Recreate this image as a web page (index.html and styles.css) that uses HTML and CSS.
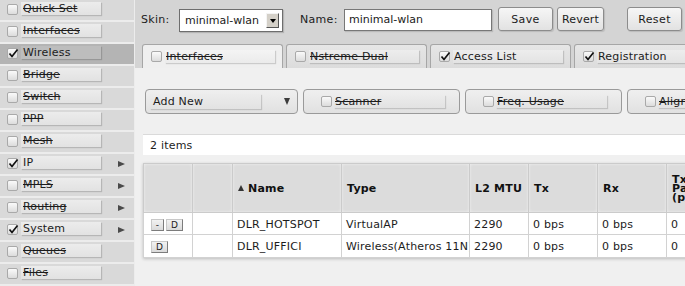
FILE: index.html
```html
<!DOCTYPE html>
<html>
<head>
<meta charset="utf-8">
<title>WebFig</title>
<link rel="stylesheet" href="styles.css">
</head>
<body>
<div class="app">
  <nav class="side">
    <div class="item"><span class="cb"></span><span class="lbl off">Quick Set</span></div>
    <div class="item"><span class="cb"></span><span class="lbl off">Interfaces</span></div>
    <div class="item sel"><span class="cb on"><svg viewBox="0 0 10 10"><path d="M1.5 4.5 L4 7.5 L9.5 0.5" /></svg></span><span class="lbl">Wireless</span></div>
    <div class="item"><span class="cb"></span><span class="lbl off">Bridge</span></div>
    <div class="item"><span class="cb"></span><span class="lbl off">Switch</span></div>
    <div class="item"><span class="cb"></span><span class="lbl off">PPP</span></div>
    <div class="item"><span class="cb"></span><span class="lbl off">Mesh</span></div>
    <div class="item"><span class="cb on"><svg viewBox="0 0 10 10"><path d="M1.5 4.5 L4 7.5 L9.5 0.5" /></svg></span><span class="lbl">IP</span><span class="arrow"></span></div>
    <div class="item"><span class="cb"></span><span class="lbl off">MPLS</span><span class="arrow"></span></div>
    <div class="item"><span class="cb"></span><span class="lbl off">Routing</span><span class="arrow"></span></div>
    <div class="item"><span class="cb on"><svg viewBox="0 0 10 10"><path d="M1.5 4.5 L4 7.5 L9.5 0.5" /></svg></span><span class="lbl">System</span><span class="arrow"></span></div>
    <div class="item"><span class="cb"></span><span class="lbl off">Queues</span></div>
    <div class="item"><span class="cb"></span><span class="lbl off">Files</span></div>
  </nav>

  <main class="main">
    <div class="topbar">
      <span class="flabel skin">Skin:</span>
      <div class="select"><span class="seltext">minimal-wlan</span><span class="selbtn"><span class="seltri"></span></span></div>
      <span class="flabel name">Name:</span>
      <div class="input">minimal-wlan</div>
      <button class="btn save">Save</button>
      <button class="btn revert">Revert</button>
      <button class="btn reset">Reset</button>
    </div>

    <div class="tabs">
      <div class="tab active"><span class="cb"></span><span class="tlbl off">Interfaces</span></div>
      <div class="tab"><span class="cb"></span><span class="tlbl off">Nstreme Dual</span></div>
      <div class="tab"><span class="cb on"><svg viewBox="0 0 10 10"><path d="M1.5 4.5 L4 7.5 L9.5 0.5" /></svg></span><span class="tlbl">Access List</span></div>
      <div class="tab"><span class="cb on"><svg viewBox="0 0 10 10"><path d="M1.5 4.5 L4 7.5 L9.5 0.5" /></svg></span><span class="tlbl">Registration</span></div>
    </div>

    <div class="panel">
      <div class="toolbar">
        <div class="tbtn addnew"><span class="blbl big">Add New</span><span class="downtri"></span></div>
        <div class="tbtn chk"><span class="cb"></span><span class="blbl off">Scanner</span></div>
        <div class="tbtn chk"><span class="cb"></span><span class="blbl off">Freq. Usage</span></div>
        <div class="tbtn chk"><span class="cb"></span><span class="blbl off">Align</span></div>
      </div>

      <div class="count">2 items</div>

      <table class="grid">
        <colgroup>
          <col class="c1"><col class="c2"><col class="c3"><col class="c4"><col class="c5"><col class="c6"><col class="c7"><col class="c8">
        </colgroup>
        <thead>
          <tr>
            <th></th>
            <th></th>
            <th><span class="sorttri"></span>Name</th>
            <th>Type</th>
            <th>L2 MTU</th>
            <th>Tx</th>
            <th>Rx</th>
            <th class="multi">Tx<br>Packet<br>(p/s)</th>
          </tr>
        </thead>
        <tbody>
          <tr>
            <td class="acts"><span class="rb minus">-</span><span class="rb">D</span></td>
            <td></td>
            <td>DLR_HOTSPOT</td>
            <td>VirtualAP</td>
            <td>2290</td>
            <td>0 bps</td>
            <td>0 bps</td>
            <td>0</td>
          </tr>
          <tr>
            <td class="acts"><span class="rb">D</span></td>
            <td></td>
            <td>DLR_UFFICI</td>
            <td>Wireless(Atheros 11N)</td>
            <td>2290</td>
            <td>0 bps</td>
            <td>0 bps</td>
            <td>0</td>
          </tr>
        </tbody>
      </table>
    </div>
  </main>
</div>
</body>
</html>
```

FILE: styles.css
```css
html, body {
  margin: 0;
  padding: 0;
}
body {
  width: 685px;
  height: 286px;
  overflow: hidden;
  font-family: "DejaVu Sans", Verdana, sans-serif;
  font-size: 11px;
  color: #1c1c1c;
  background: #d4d4d4;
}
.app {
  display: flex;
  height: 286px;
}

/* ---------- sidebar ---------- */
.side {
  width: 134px;
  flex: none;
  background: #d9d9d9;
  border-right: 1px solid #ececec;
}
.item {
  height: 20px;
  border-bottom: 2px solid #ececec;
  display: flex;
  align-items: flex-start;
  padding-left: 7px;
}
.item.sel {
  background: #b4b4b4;
}
.cb {
  width: 9px;
  height: 9px;
  flex: none;
  border: 1px solid #a9a9a9;
  border-radius: 2px;
  background: linear-gradient(#fafafa, #dcdcdc);
  margin-top: 4px;
  box-sizing: content-box;
}
.cb svg {
  display: block;
  width: 10px;
  height: 10px;
  overflow: visible;
}
.cb svg path {
  fill: none;
  stroke: #111;
  stroke-width: 1.7;
}
.lbl {
  margin-left: 3px;
  margin-top: 2px;
  width: 78px;
  height: 13px;
  line-height: 13px;
  padding-left: 2px;
  background: linear-gradient(#ececec, #e2e2e2);
  box-shadow: 1px 1px 1px rgba(0, 0, 0, 0.16);
  white-space: nowrap;
  overflow: hidden;
  letter-spacing: 0.2px;
}
.item.sel .lbl {
  background: #bdbdbd;
}
.off {
  text-decoration: line-through;
}
.arrow {
  margin-left: auto;
  margin-right: 9px;
  margin-top: 7px;
  width: 0;
  height: 0;
  border-left: 7px solid #4a4a4a;
  border-top: 3.5px solid transparent;
  border-bottom: 3.5px solid transparent;
}

/* ---------- main ---------- */
.main {
  flex: 1;
  min-width: 0;
  overflow: hidden;
  background: #d4d4d4;
  display: flex;
  flex-direction: column;
}
.topbar {
  display: flex;
  align-items: flex-start;
  padding: 7px 0 0 6px;
  height: 25px;
}
.flabel {
  line-height: 25px;
  letter-spacing: 0.3px;
  flex: none;
}
.flabel.skin {
  width: 38px;
}
.flabel.name {
  width: 44px;
  margin-left: 17px;
}
.select {
  width: 104px;
  height: 23px;
  box-sizing: border-box;
  margin-top: 2px;
  background: #fff;
  border: 1px solid #6e6e6e;
  box-shadow: 1px 1px 1px rgba(0, 0, 0, 0.15);
  display: flex;
  align-items: center;
  flex: none;
}
.seltext {
  padding-left: 5px;
  flex: 1;
  white-space: nowrap;
  overflow: hidden;
}
.selbtn {
  width: 13px;
  height: 15px;
  margin-right: 3px;
  box-sizing: border-box;
  background: #d4d0c8;
  border: 1px solid;
  border-color: #f4f4f4 #555 #555 #f4f4f4;
  display: flex;
  align-items: center;
  justify-content: center;
}
.seltri {
  width: 0;
  height: 0;
  border-top: 4px solid #000;
  border-left: 3.5px solid transparent;
  border-right: 3.5px solid transparent;
}
.input {
  width: 148px;
  height: 22px;
  box-sizing: border-box;
  margin-top: 2px;
  background: #fff;
  border: 1px solid #777;
  box-shadow: 1px 1px 1px rgba(0, 0, 0, 0.12);
  line-height: 20px;
  padding-left: 4px;
  flex: none;
}
.btn {
  height: 24px;
  box-sizing: border-box;
  border: 1px solid #8c8c8c;
  border-radius: 3px;
  background: linear-gradient(#f6f6f6, #e2e2e2);
  box-shadow: 1px 1px 1px rgba(0, 0, 0, 0.12);
  font: inherit;
  color: inherit;
  letter-spacing: 0.4px;
  padding: 0;
  flex: none;
}
.btn.save {
  width: 55px;
  margin-left: 6px;
}
.btn.revert {
  width: 47px;
  margin-left: 4px;
  letter-spacing: 0.2px;
}
.btn.reset {
  width: 55px;
  margin-left: 23px;
}

/* ---------- tabs ---------- */
.tabs {
  display: flex;
  gap: 3px;
  margin-top: 12px;
  padding-left: 7px;
  height: 24px;
}
.tab {
  width: 141px;
  height: 24px;
  flex: none;
  box-sizing: border-box;
  border: 1px solid #a6a6a6;
  border-bottom: none;
  border-radius: 3px 3px 0 0;
  background: linear-gradient(#e6e6e6, #dcdcdc);
  display: flex;
  align-items: flex-start;
  padding-left: 8px;
}
.tab.active {
  background: #efefef;
}
.tab .cb {
  margin-top: 6px;
}
.tlbl {
  margin-left: 3px;
  margin-top: 5px;
  width: 109px;
  height: 13px;
  line-height: 13px;
  padding-left: 1px;
  background: linear-gradient(#ededed, #e3e3e3);
  box-shadow: 1px 1px 1px rgba(0, 0, 0, 0.15);
  white-space: nowrap;
  overflow: hidden;
  letter-spacing: 0.2px;
}
.tab.active .tlbl {
  background: linear-gradient(#f4f4f4, #ebebeb);
}

/* ---------- panel ---------- */
.panel {
  flex: 1;
  background: #f0f0f0;
  overflow: hidden;
}
.toolbar {
  display: flex;
  gap: 5px;
  padding: 21px 0 0 10px;
}
.tbtn {
  height: 25px;
  box-sizing: border-box;
  border: 1px solid #9a9a9a;
  border-radius: 4px;
  background: linear-gradient(#efefef, #e1e1e1);
  display: flex;
  align-items: center;
  flex: none;
}
.tbtn.addnew {
  width: 153px;
  padding-left: 4px;
}
.tbtn.chk {
  width: 157px;
  padding-left: 17px;
}
.tbtn .cb {
  margin-top: 0;
}
.blbl {
  margin-left: 2px;
  width: 110px;
  height: 13px;
  line-height: 13px;
  padding-left: 1px;
  background: linear-gradient(#ececec, #e2e2e2);
  box-shadow: 1px 1px 1px rgba(0, 0, 0, 0.15);
  white-space: nowrap;
  overflow: hidden;
  letter-spacing: 0.2px;
}
.blbl.big {
  margin-left: 0;
  width: 108px;
  height: 15px;
  line-height: 15px;
  padding-left: 3px;
}
.downtri {
  margin-left: auto;
  margin-right: 7px;
  width: 0;
  height: 0;
  border-top: 7px solid #3c3c3c;
  border-left: 3.5px solid transparent;
  border-right: 3.5px solid transparent;
}
.count {
  margin: 20px 0 0 8px;
  height: 20px;
  line-height: 21px;
  border-top: 1px solid #dadada;
  background: #fff;
  padding-left: 7px;
  letter-spacing: 0.2px;
}

/* ---------- table ---------- */
.grid {
  margin: 8px 0 0 8px;
  border-collapse: collapse;
  table-layout: fixed;
  width: 603px;
  box-shadow: 0 1px 3px rgba(0, 0, 0, 0.22);
}
.c1 { width: 49px; }
.c2 { width: 40px; }
.c3 { width: 109px; }
.c4 { width: 128px; }
.c5 { width: 59px; }
.c6 { width: 69px; }
.c7 { width: 69px; }
.c8 { width: 80px; }
.grid th {
  height: 48px;
  background: #dcdcdc;
  box-shadow: inset 0 0 3px rgba(255, 255, 255, 0.6);
  border: 1px solid #cbcbcb;
  text-align: left;
  font-weight: bold;
  padding: 0 4px 0 5px;
  white-space: nowrap;
  overflow: hidden;
  color: #111;
  letter-spacing: 0.2px;
}
.grid th.multi {
  line-height: 9px;
}
.sorttri {
  display: inline-block;
  width: 0;
  height: 0;
  border-bottom: 6px solid #333;
  border-left: 3.5px solid transparent;
  border-right: 3.5px solid transparent;
  margin-right: 4px;
  vertical-align: 1px;
}
.grid td {
  height: 20px;
  background: #fff;
  border: 1px solid #d2d2d2;
  padding: 1px 0 0 4px;
  white-space: nowrap;
  overflow: hidden;
  letter-spacing: 0.2px;
}
.grid tbody tr + tr td {
  height: 21px;
}
.grid td.acts {
  padding-left: 7px;
}
.rb {
  display: inline-block;
  vertical-align: middle;
  width: 15px;
  height: 10px;
  line-height: 10px;
  border: 1px solid;
  border-color: #c8c8c8 #7c7c7c #7c7c7c #c8c8c8;
  background: linear-gradient(#f2f2f2, #dadada);
  font-size: 9px;
  text-align: center;
  margin-right: 2px;
}
.rb.minus {
  width: 11px;
}
```
